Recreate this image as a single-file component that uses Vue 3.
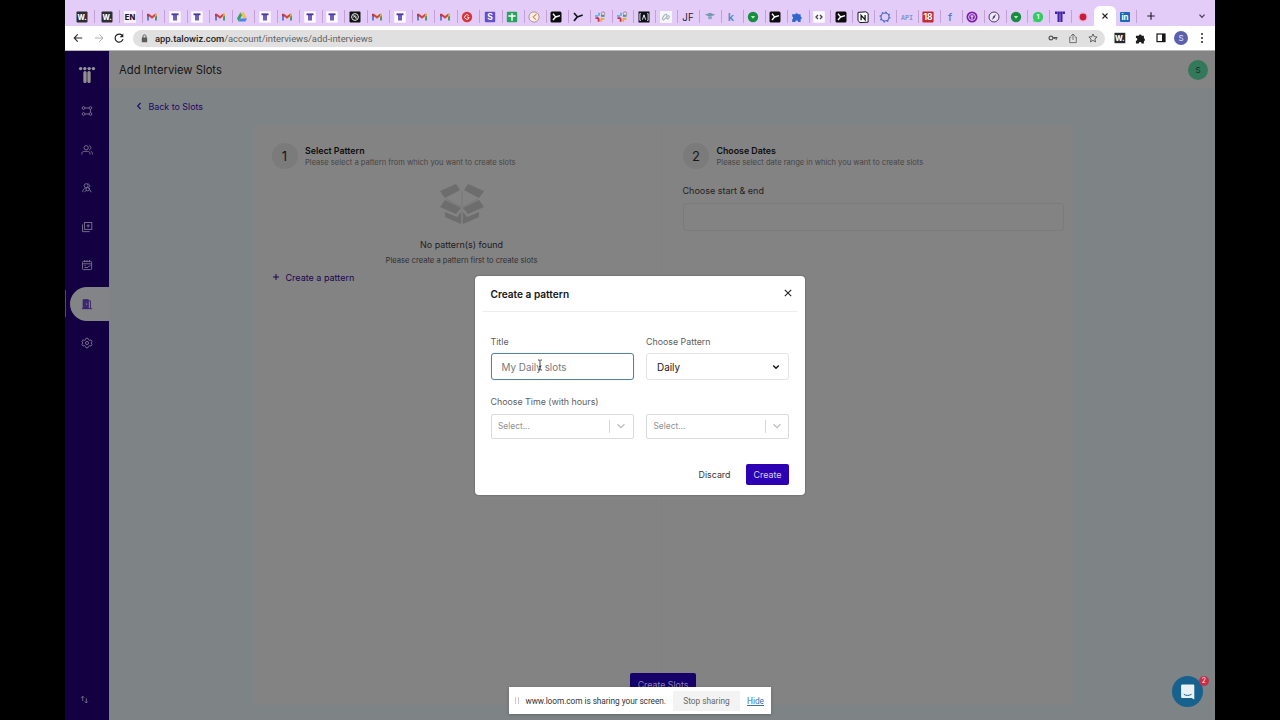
<script setup>
const txt = (s, fill, size, x = 6, y = 9, w = 700) =>
  `<text x="${x}" y="${y}" fill="${fill}" font-size="${size}" font-weight="${w}" text-anchor="middle" font-family="Inter, sans-serif">${s}</text>`
const icons = {
  w: '<rect x=".5" y=".5" width="11" height="11" rx="1" fill="#2d2d33"/>' + txt('W.', '#fff', 7, 6, 8.6, 800),
  en: '<rect width="12" height="12" fill="#f8f0fc"/>' + txt('EN', '#26151c', 7.6, 6, 8.8, 800),
  gmail: '<path d="M2 9.5V3" stroke="#5a7fe0" stroke-width="2" fill="none"/><path d="M2 3.2l4 3.2 4-3.2" stroke="#d5443c" stroke-width="2" fill="none"/><path d="M10 9.5V3" stroke="#4b9a62" stroke-width="2"/><path d="M9 3.8l2-1.5v2.2L9 6z" fill="#e9b43a"/><path d="M1 2.6l2 1.2V6L1 4.8z" fill="#b8364c"/>',
  t: '<rect x=".3" y=".3" width="11.4" height="11.4" fill="#fcf9ff"/><path d="M2.5 3.3h7" stroke="#4c37a6" stroke-width="1.8"/><path d="M5 4v5.5M7 4v5.5" stroke="#4c37a6" stroke-width="1.6"/>',
  t2: '<path d="M1 1.8h10" stroke="#4322a8" stroke-width="2.4" stroke-dasharray="2.3 .25"/><path d="M4.6 3v8M7.4 3v8" stroke="#4322a8" stroke-width="2.2"/>',
  drive: '<path d="M4.3 1.5h3.4L11 7.5H7.6z" fill="#eec044"/><path d="M4.3 1.5L1 7.5l1.6 3L6 4.5z" fill="#32a263"/><path d="M4.2 7.5H11l-1.6 3H2.6z" fill="#4b84e4"/>',
  oo: '<rect x=".5" y=".5" width="11" height="11" rx="1" fill="#111"/><circle cx="6" cy="6" r="3.4" fill="none" stroke="#eee"/><path d="M4.5 4l3 4M4.5 6.5c0-2 3-2 3 0" stroke="#eee" stroke-width=".9" fill="none"/>',
  g: '<circle cx="6" cy="6" r="5.2" fill="#d8353b"/><path d="M7.7 4.5A2.3 2.3 0 1 0 8.2 6.6L6.2 6" fill="none" stroke="#fff" stroke-width=".9"/>',
  s: '<rect x=".8" y=".8" width="10.4" height="10.4" rx="1" fill="#6251cb"/>' + txt('S', '#fff', 8.5),
  sheet: '<rect x=".8" y=".8" width="10.4" height="10.4" rx="1" fill="#27a45c"/><path d="M2.4 5h7.2M6 2.3v7.5" stroke="#fff" stroke-width="1.5"/>',
  clock: '<circle cx="6" cy="6" r="5.1" fill="#f9f1f0" stroke="#b49191"/><path d="M8.5 3L5 6l3 2.6" fill="none" stroke="#e0923d" stroke-width="1.1"/>',
  arrow: '<rect x=".5" y=".5" width="11" height="11" rx="1.5" fill="#0c0c0f"/><path d="M3 2.8l2.6 3.1L3 9M5.6 6L10 4.6" fill="none" stroke="#fff" stroke-width="1.4"/>',
  arrowb: '<path d="M2 2l3.3 3.7L2 10M5.3 6l5.4-2" fill="none" stroke="#161322" stroke-width="1.7"/>',
  slack: '<path d="M5 1.8v3" stroke="#50b8dc" stroke-width="1.8"/><path d="M1 5h3" stroke="#50b8dc" stroke-width="1.8"/><path d="M1.5 7.2h3.2M4.6 7.3v3.5" stroke="#cc2756" stroke-width="1.8"/><path d="M7.2 7.5v3.3M7 7.8h3.5" stroke="#e3ad3b" stroke-width="1.8"/><path d="M7 4.9h3.5" stroke="#389d73" stroke-width="1.8"/><circle cx="9" cy="2.6" r="1.7" fill="#ece2ee" stroke="#8b7984" stroke-width=".8"/>',
  a: '<rect x=".5" y=".5" width="11" height="11" fill="#0c0f16"/><path d="M4.4 8.7L6 3.8l1.6 4.9M2.7 2.5H1.9v7h.8M9.3 2.5h.8v7h-.8" stroke="#fff" stroke-width=".9" fill="none"/>',
  sketch: '<rect width="12" height="12" fill="#f7f5fa"/><path d="M2 8.5c2-5 4-6.5 5-4s-3 3-4 5M6 7c2-4 5-2 2 1z" stroke="#a3b7b6" stroke-width="1.1" fill="none"/>',
  jf: '<text x="6" y="9.8" font-size="9.8" fill="#27202e" text-anchor="middle" font-family="Inter, sans-serif">JF</text>',
  cap: '<path d="M.8 3.8l5.2-2 5.2 2-5.2 2z" fill="#7598b3"/><path d="M4 5.4v2l2 1 2-1v-2" fill="#8ba9bd"/>',
  k: txt('k', '#4a90c9', 11, 6, 9.7, 600),
  green: '<circle cx="6" cy="6" r="5.2" fill="#168d3f"/><path d="M3.8 5h4.4L6 7.8z" fill="#b7edbd"/>',
  ext: '<path d="M1.2 3.2h3a1.6 1.6 0 0 1 3 0h2.4v2.4a1.6 1.6 0 0 1 0 3v2.4H7.2a1.4 1.4 0 0 0-2.9 0H1.2V8.3a1.4 1.4 0 0 0 0-2.7z" fill="#2f67cf"/>',
  code: '<rect x=".2" y=".2" width="11.6" height="11.6" fill="#fbf8ff"/><path d="M5 4L3 6l2 2M7 4l2 2-2 2" stroke="#4b4447" stroke-width="1.3" fill="none"/>',
  n: '<path d="M1 1.4l7.8-.6 2.3 1.6v8.8l-8.4.4L1 9.2z" fill="#fff" stroke="#191720"/><path d="M4.1 9.3V4.4l4 4.4V4" stroke="#191720" stroke-width="1.3" fill="none"/>',
  gear: '<circle cx="6" cy="6" r="4" fill="none" stroke="#3f63c6" stroke-width="1.1"/><circle cx="6" cy="6" r="4.9" fill="none" stroke="#3f63c6" stroke-width="1.1" stroke-dasharray="1.6 2.2"/>',
  api: '<text x="6" y="8.5" font-size="6.6" font-weight="600" fill="#8394cf" text-anchor="middle" font-family="Liberation Mono, monospace">API</text>',
  n18: '<rect x=".4" y=".4" width="11.2" height="11.2" rx="1" fill="#c42b34"/>' + txt('18', '#fff', 8.5),
  f: txt('f', '#5b77c5', 11, 6, 9.5, 500),
  purple: '<circle cx="6" cy="6" r="5.5" fill="#7b1fa9"/><circle cx="6" cy="6" r="3.4" fill="none" stroke="#e5ccf3"/><path d="M4.5 5h3M6 5v3.5" stroke="#fff"/>',
  compass: '<circle cx="6" cy="6" r="5" fill="#f1e6f9" stroke="#4b3d66"/><path d="M8 3L5.2 5.4 4 9l2.7-2.4z" fill="#4b3d66"/>',
  wa: '<circle cx="6" cy="6" r="5.2" fill="#31ce65"/><path d="M1.2 11l.7-3 2 2z" fill="#31ce65"/>' + txt('1', '#fff', 6.5, 6, 8.3),
  rec: '<circle cx="6" cy="6" r="5" fill="#efb8d4"/><circle cx="6" cy="6" r="3.4" fill="#c51d40"/>',
}
const tabs = [
  'w', 'w', 'en', 'gmail', 't', 't', 'gmail', 'drive', 't', 'gmail', 't', 't', 'oo', 'gmail', 't', 'gmail', 'gmail',
  'g', 's', 'sheet', 'clock', 'arrow', 'arrowb', 'slack', 'slack', 'a', 'sketch', 'jf', 'cap', 'k', 'green', 'arrow',
  'ext', 'code', 'arrow', 'n', 'gear', 'api', 'n18', 'f', 'purple', 'compass', 'green', 'wa', 't2', 'rec',
]
const size = (i) => (i < 2 ? 'big' : i < 20 ? 'mid' : 'small')

const nav = [
  '<circle cx="3" cy="3.5" r="1.6"/><circle cx="3" cy="10.5" r="1.6"/><circle cx="11" cy="3.5" r="1.6"/><circle cx="11" cy="10.5" r="1.6"/><path d="M4.6 3.5h4.8M11 5.1v3.8M4.6 10.5h4.8"/>',
  '<circle cx="6" cy="4.4" r="2.5"/><path d="M.9 12.3v-1c0-1.6 1.2-2.7 2.8-2.7h4c1.6 0 2.8 1.1 2.8 2.7v1M9.7 2c2.4.5 2.4 4.2 0 4.9M11.4 8.7c1.4.3 2 1.3 2 2.5v1.1"/>',
  '<circle cx="6" cy="4.3" r="2.3"/><path d="M2 11.5c0-2.4 1.2-3.8 3.2-4.2M7.5 2.2c2.6 0 3.6 2.8 1.8 4.3M9 7l3 5"/><circle cx="7.8" cy="8.4" r="2"/><path d="M4 11.5l2.3-1.8"/>',
  '<rect x="4" y="1.8" width="8.6" height="8"/><path d="M1.8 4v8.4h8.4M8.3 3.7v4M6.3 5.7h4"/>',
  '<rect x="1.8" y="2.8" width="10.6" height="9.6" rx="1"/><path d="M1.8 5.6h10.6M4.3 1.2v2.5M7 1.2v2.5M9.9 1.2v2.5M4 7.8h1.5M4 10h4.2M8 8.2l1 1 2-2"/>',
  '<path d="M2.5 2h6v10h-6z" fill="#3a2a72"/><path d="M1 12.4h12M8.5 3.3H11v9"/><path d="M6.6 6.3v1.8" stroke="#838485"/>',
  '<circle cx="7" cy="7" r="1.8"/><path d="M5.8 1.5h2.4l.5 1.7 1.3.7 1.7-.5 1.2 2.1L11.7 7l1.2 1.5-1.2 2.1-1.7-.5-1.3.7-.5 1.7H5.8l-.5-1.7-1.3-.7-1.7.5-1.2-2.1L2.3 7 1.1 5.5l1.2-2.1 1.7.5 1.3-.7z"/>',
]
</script>

<template>
  <div class="screen">
    <div class="browser">
      <div class="tabs">
        <span v-for="(t, i) in tabs" :key="i" class="tab" :class="[size(i), { last: i === 45 }]">
          <svg viewBox="0 0 12 12" width="12" height="12" v-html="icons[t]"></svg>
        </span>
        <span class="active-tab"><svg viewBox="0 0 10 10" width="10" height="10"><path d="M2.5 2.5l5 5M7.5 2.5l-5 5" stroke="#252129" stroke-width="1.1" /></svg></span>
        <span class="tab linkedin"><svg viewBox="0 0 12 12" width="12" height="12"><rect x="1" y="1" width="10" height="10" rx="1" fill="#1e68b4" /><text x="6" y="9" fill="#fff" font-size="8" font-weight="700" text-anchor="middle" font-family="Inter">in</text></svg></span>
        <svg class="plus" viewBox="0 0 10 10" width="10" height="10"><path d="M5 1.2v7.6M1.2 5h7.6" stroke="#29222e" stroke-width="1.2" /></svg>
        <svg class="chev" viewBox="0 0 8 8" width="8" height="8"><path d="M1.5 2.7L4 5.3l2.5-2.6" fill="none" stroke="#453951" stroke-width="1.2" /></svg>
      </div>
      <div class="toolbar">
        <svg class="back" viewBox="0 0 10 10" width="10" height="10"><path d="M9.2 5H1.2M4.7 1.3L1.2 5l3.5 3.7" fill="none" stroke="#2d2d2d" stroke-width="1.1" /></svg>
        <svg class="fwd" viewBox="0 0 10 10" width="10" height="10"><path d="M1 5h8M5.3 1.3L9 5 5.3 8.7" fill="none" stroke="#b0b0b0" stroke-width="1" /></svg>
        <svg class="reload" viewBox="0 0 10 10" width="10" height="10"><path d="M8.1 2.4A4 4 0 1 0 9 6.2" fill="none" stroke="#222" stroke-width="1.2" /><path d="M9.3.6v3.7H5.6z" fill="#222" /></svg>
        <div class="address">
          <svg viewBox="0 0 7 9" width="7" height="9"><rect x=".8" y="3.5" width="5.4" height="4.8" rx=".6" fill="#5b5b5b" /><path d="M2 4V2.4a1.5 1.5 0 0 1 3 0V4" fill="none" stroke="#5b5b5b" /></svg>
          <span class="url"><b>app.talowiz.com</b>/account/interviews/add-interviews</span>
          <svg class="key" viewBox="0 0 10 10" width="10" height="10"><circle cx="3" cy="5" r="1.9" fill="none" stroke="#555" stroke-width="1.2" /><path d="M5 4.7h4.5M8.2 5v1.8M6.5 5v1" stroke="#555" stroke-width="1.2" /></svg>
          <svg class="share" viewBox="0 0 10 11" width="10" height="11"><path d="M3.2 4H1.7v5.6h6.6V4H6.8M5 7V1M3 2.9L5 1l2 1.9" fill="none" stroke="#666" stroke-width=".9" /></svg>
          <svg class="star" viewBox="0 0 10 10" width="10" height="10"><path d="M5 1l1.2 2.7 2.9.3-2.2 2 .7 2.9L5 7.4 2.4 8.9 3.1 6 .9 4l2.9-.3z" fill="none" stroke="#555" stroke-width=".9" /></svg>
        </div>
        <svg class="e1" viewBox="0 0 12 12" width="12" height="12"><rect x=".5" y=".8" width="10.8" height="10.4" fill="#282828" /><text x="5.8" y="8.8" font-size="7.4" font-weight="800" fill="#fff" text-anchor="middle" font-family="Inter">W.</text></svg>
        <svg class="e2" viewBox="0 0 12 12" width="11" height="11"><path d="M1 3h3a1.7 1.7 0 0 1 3.3 0h2.4v2.7a1.7 1.7 0 0 1 0 3.2v2.5H7.1a1.5 1.5 0 0 0-3 0H1V8.5a1.5 1.5 0 0 0 0-3z" fill="#1d1d1d" /></svg>
        <svg class="e3" viewBox="0 0 10 10" width="10" height="10"><rect x="1" y="1" width="8" height="7.6" fill="none" stroke="#171717" stroke-width="1.2" /><path d="M6 1h3v7.6H6z" fill="#171717" /></svg>
        <span class="avatar">S</span>
        <svg class="dots" viewBox="0 0 4 12" width="4" height="12"><g fill="#252525"><circle cx="2" cy="2" r="1" /><circle cx="2" cy="6" r="1" /><circle cx="2" cy="10" r="1" /></g></svg>
      </div>
      <div class="app">
        <aside>
          <svg class="logo" viewBox="0 0 18 20" width="18" height="20"><g fill="#96949c"><circle cx="2.6" cy="3.6" r="1.7" /><circle cx="6.8" cy="3.6" r="1.7" /><circle cx="11.2" cy="3.6" r="1.7" /><circle cx="15.4" cy="3.6" r="1.7" /></g><path d="M7 7.6v8.8M11 7.6v8.8" stroke="#92908c" stroke-width="3.3" stroke-linecap="round" /></svg>
          <div v-for="(n, i) in nav" :key="i" class="nav" :class="{ on: i === 5 }">
            <svg viewBox="0 0 14 14" width="12" height="12" v-html="n"></svg>
          </div>
          <svg class="swap" viewBox="0 0 10 10" width="9" height="9"><path d="M3 6.5v-5M1.3 3l1.7-1.7L4.7 3M7 3.7v5M5.3 7.2L7 8.9l1.7-1.7" fill="none" stroke="#77718c" /></svg>
        </aside>
        <main>
          <header><h1>Add Interview Slots</h1><span class="user">S</span></header>
          <a class="backlink"><svg viewBox="0 0 6 8" width="6" height="8"><path d="M4.6 1L1.6 4l3 3" fill="none" stroke="#1c0865" stroke-width="1.1" /></svg><span>Back to Slots</span></a>
          <section class="card">
            <div class="col left">
              <div class="step"><i>1</i><div><h2>Select Pattern</h2><p>Please select a pattern from which you want to create slots</p></div></div>
              <div class="empty">
                <svg viewBox="0 0 46 42" width="46" height="42"><g fill="#6d6d6d"><path d="M1 8L17 1l4 6-15 8z" /><path d="M45 8L29 1l-4 6 15 8z" /><path d="M6 17l16 8-5 6L1 24z" /><path d="M40 17l-16 8 5 6 16-7z" /><path d="M6 29l12 5 4-5v12L6 34z" /><path d="M40 29l-12 5-4-5v12l16-7z" /></g><path d="M23 8v32M7 16l15 8M39 16l-15 8" stroke="#777" stroke-width="1" /></svg>
                <h3>No pattern(s) found</h3>
                <p>Please create a pattern first to create slots</p>
              </div>
              <a class="add"><svg viewBox="0 0 8 8" width="8" height="8"><path d="M4 1v6M1 4h6" stroke="#180554" stroke-width="1" /></svg><span>Create a pattern</span></a>
            </div>
            <div class="col right">
              <div class="step"><i>2</i><div><h2>Choose Dates</h2><p>Please select date range in which you want to create slots</p></div></div>
              <label>Choose start &amp; end</label>
              <div class="range"></div>
            </div>
            <button class="create-slots">Create Slots</button>
          </section>
        </main>
      </div>
    </div>

    <div class="modal">
      <div class="mhead"><h2>Create a pattern</h2><svg viewBox="0 0 8 8" width="8" height="8"><path d="M.8.8l6.4 6.4M7.2.8L.8 7.2" stroke="#222" stroke-width="1.1" /></svg></div>
      <div class="grid">
        <div><label>Title</label><div class="input focus"><span>My Daily slots</span><svg class="cursor" viewBox="0 0 6 12" width="6" height="12"><path d="M1 1h1.3L3 1.7 3.7 1H5M3 1.7v8.6M1 11h1.3l.7-.7.7.7H5M2 7.5h2" fill="none" stroke="#333" stroke-width=".9" /></svg></div></div>
        <div><label>Choose Pattern</label><div class="input"><b>Daily</b><svg viewBox="0 0 8 8" width="8" height="8"><path d="M1.2 2.5L4 5.3l2.8-2.8" fill="none" stroke="#171717" stroke-width="1.5" /></svg></div></div>
      </div>
      <label class="l3">Choose Time (with hours)</label>
      <div class="grid times">
        <div v-for="n in 2" :key="n" class="select"><span>Select...</span><i></i><svg viewBox="0 0 10 8" width="10" height="8"><path d="M1.5 2.2L5 5.6l3.5-3.4" fill="none" stroke="#bdbdbd" stroke-width="1.3" /></svg></div>
      </div>
      <div class="actions"><span>Discard</span><button>Create</button></div>
    </div>

    <div class="sharebar"><span class="grip"></span><span class="msg">www.loom.com is sharing your screen.</span><span class="stop">Stop sharing</span><a>Hide</a></div>
    <div class="chat"><svg viewBox="0 0 16 18" width="16" height="18"><path d="M2.5 1.6h10.6c.7 0 1.2.5 1.2 1.2v13.8L11.6 15H2.5c-.8 0-1.4-.5-1.4-1.3V2.9c0-.8.6-1.3 1.4-1.3z" fill="#e9f1f5" /><path d="M3.8 11.3c2.2 1.5 5.4 1.5 7.7 0" fill="none" stroke="#16618d" /></svg><em>2</em></div>
  </div>
</template>

<style>
html, body { margin: 0; background: #000; overflow: hidden; }
</style>
<style scoped>
.screen { position: relative; width: 1280px; height: 720px; background: #000; overflow: hidden; font-family: Inter, "Open Sans", sans-serif; }
.screen * { box-sizing: border-box; }
svg { display: block; flex: none; overflow: visible; }
h1, h2, h3, p { margin: 0; }
span, label, h1, h2, h3, p, a { white-space: nowrap; }
.browser { width: 1150px; height: 720px; margin-left: 65px; display: flex; flex-direction: column; overflow: hidden; }
.tabs { height: 26px; flex: none; background: #e3cdf8; display: flex; align-items: flex-start; padding: 10px 0 0 5px; }
.tab { height: 13px; flex: none; display: flex; align-items: center; justify-content: center; padding-right: 2px; border-right: 1px solid #c3a1d4; }
.tab.big { width: 25px; padding-right: 0; }
.tab.mid { width: 22.5px; }
.tab.small { width: 21.9px; }
.tab.last { width: 22px; border: 0; padding: 0; }
.active-tab { width: 22px; height: 20px; margin-top: -4px; border-radius: 6px 6px 0 0; background: #fff; display: flex; align-items: center; justify-content: center; flex: none; }
.tab.linkedin { width: 21px; }
.plus { margin: 1px 0 0 9px; }
.chev { margin: 2px 9px 0 auto; }
.toolbar { height: 25px; flex: none; background: #fff; border-bottom: 1px solid #b7b7b7; display: flex; align-items: center; }
.back { margin-left: 8px; }
.fwd { margin-left: 11px; }
.reload { margin-left: 10px; }
.address { width: 972px; height: 17px; margin: 0 9px 0 9px; padding: 0 7px; border-radius: 9px; background: #e0e0e0; display: flex; align-items: center; flex: none; }
.address > svg:first-child { margin-left: 1px; }
.url { margin-left: 7px; font-family: Roboto, sans-serif; font-size: 9.4px; color: #606060; }
.url b { font-weight: 500; color: #222; }
.key { margin-left: auto; }
.share, .star { margin-left: 10px; }
.e2 { margin-left: 9px; }
.e3 { margin-left: 10px; }
.avatar { width: 14px; height: 14px; margin-left: 8px; border-radius: 50%; background: #5b60ac; color: #e4e4fa; font-size: 8px; display: flex; align-items: center; justify-content: center; flex: none; }
.dots { margin-left: 12px; }
.app { flex: 1; display: flex; min-height: 0; }
aside { width: 44px; background: linear-gradient(#514a68, #514a68) 0 239px / 1px 27px no-repeat #130042; display: flex; flex-direction: column; align-items: flex-end; }
.logo { margin: 14px 13px 9px 0; }
.nav { width: 39px; height: 34px; margin-bottom: 4.6px; padding-left: 11px; display: flex; align-items: center; }
.nav svg { fill: none; stroke: #77718c; stroke-width: 1.1; }
.nav.on { background: #838485; border-radius: 17px 0 0 17px; }
.nav.on svg { stroke: #38216f; }
.swap { margin: auto 20px 16px 0; }
main { flex: 1; background: #7e8486; display: flex; flex-direction: column; min-width: 0; }
header { height: 37px; background: #848484; display: flex; align-items: center; justify-content: space-between; padding: 0 7px 0 10px; flex: none; }
h1 { font-size: 11.25px; font-weight: 400; color: #141414; }
.user { width: 20px; height: 20px; border-radius: 50%; background: #33785b; color: #152d27; font-size: 8px; display: flex; align-items: center; justify-content: center; }
.backlink { display: flex; align-items: center; gap: 6.5px; margin: 11px 0 0 27px; height: 14px; color: #1c0865; font-size: 8.9px; }
.card { width: 820px; height: 580px; margin: 12px 0 0 144px; background: #838383; display: grid; grid-template-columns: 409px 411px; grid-template-rows: 1fr auto; flex: none; }
.col { padding: 18px 0 0; }
.left { border-right: 1px solid #818181; }
.step { display: flex; align-items: center; height: 26px; padding-left: 18.5px; }
.step i { width: 26px; height: 26px; border-radius: 50%; background: #7b7b7b; color: #171717; font-style: normal; font-size: 13px; display: flex; align-items: center; justify-content: center; margin-right: 7.5px; flex: none; }
.step h2 { font-size: 8.8px; line-height: 12px; font-weight: 600; color: #0d0d0d; }
.step p { font-size: 7.55px; line-height: 11px; color: #454545; }
.right .step { padding-left: 21px; }
.empty { display: flex; flex-direction: column; align-items: center; padding-left: 9px; margin-top: 14px; }
.empty h3 { margin-top: 13px; font-size: 8.95px; line-height: 14px; font-weight: 400; color: #1c1c1c; }
.empty p { margin-top: 1.5px; font-size: 7.6px; line-height: 14px; color: #303030; }
.add { display: flex; align-items: center; gap: 6px; margin: 2.5px 0 0 18.5px; height: 14px; color: #180554; font-size: 9px; }
.right label { display: block; margin: 15px 0 0 20.5px; height: 14px; line-height: 14px; font-size: 9px; color: #222; }
.range { width: 381px; height: 28px; margin: 5px 0 0 20.5px; border: 1px solid #7b7b7b; border-radius: 3px; }
.create-slots { grid-column: 1 / 3; justify-self: center; width: 66px; height: 22px; margin-bottom: 10px; border: 0; border-radius: 2px; background: #160069; color: #8b83ae; font: 8.8px Inter; padding: 1px 0 0; white-space: nowrap; }
.modal { position: absolute; left: 475px; top: 276px; width: 329.5px; height: 218.5px; padding: 0 15.5px; background: #fff; border-radius: 4px; box-shadow: 0 0 2px #555; }
.mhead { height: 36px; margin: 0 -8px; padding: 0 5px 0 8px; border-bottom: 1px solid #ededed; display: flex; align-items: center; justify-content: space-between; }
.mhead h2 { font-size: 10.1px; font-weight: 600; color: #151515; }
.mhead svg { margin-top: -2px; margin-right: .5px; }
.grid { display: grid; grid-template-columns: 143px 143px; column-gap: 12.5px; margin-top: 23px; }
.modal label { display: block; height: 14px; line-height: 14px; font-size: 8.85px; color: #606060; }
.input { position: relative; height: 27px; margin-top: 4px; padding: 0 8px 0 10px; border: 1px solid #e4e4e4; border-radius: 3px; display: flex; align-items: center; justify-content: space-between; font-size: 9.9px; color: #7b7b7b; }
.input.focus { border: 1.5px solid #568396; box-shadow: 0 0 1px #9eb9c5; }
.input b { font-weight: 400; color: #202020; }
.cursor { position: absolute; left: 45.5px; top: 5px; }
.modal label.l3 { margin-top: 14.5px; }
.times { margin-top: 5px; }
.select { height: 25px; border: 1px solid #dadada; border-radius: 2px; display: flex; align-items: center; font-size: 8.4px; color: #929292; padding: 0 6.5px; }
.select i { width: 1px; height: 13px; background: #d7d7d7; margin-left: auto; margin-right: 6px; }
.actions { display: flex; align-items: center; justify-content: flex-end; gap: 15.5px; margin-top: 25px; font-size: 8.9px; color: #363636; }
.actions button { width: 43px; height: 21px; border: 0; border-radius: 2px; background: #2d00b4; color: #d8cff7; font: 8.9px Inter; padding: 0; }
.sharebar { position: absolute; left: 509px; top: 687px; width: 262px; height: 27px; background: #fff; box-shadow: 0 1px 3px #4447; display: flex; align-items: center; font-family: Roboto, sans-serif; font-size: 8.3px; color: #343434; }
.grip { width: 4px; height: 7px; margin-left: 6px; border: solid #c8c8c8; border-width: 0 1px; flex: none; }
.msg { margin-left: 6.5px; letter-spacing: -.06px; }
.stop { margin-left: auto; width: 67px; height: 20px; background: #f3f3f3; color: #666; display: flex; align-items: center; justify-content: center; flex: none; }
.sharebar a { margin: 0 7px 0 7px; color: #3874b2; text-decoration: underline; }
.chat { position: absolute; left: 1172px; top: 676px; width: 31px; height: 31px; border-radius: 50%; background: #16618d; display: flex; align-items: center; justify-content: center; }
.chat em { position: absolute; left: 27px; top: 0; width: 10px; height: 10px; border-radius: 50%; background: #c52e43; color: #fbe8eb; font-style: normal; font-size: 7px; line-height: 10px; text-align: center; }
</style>
